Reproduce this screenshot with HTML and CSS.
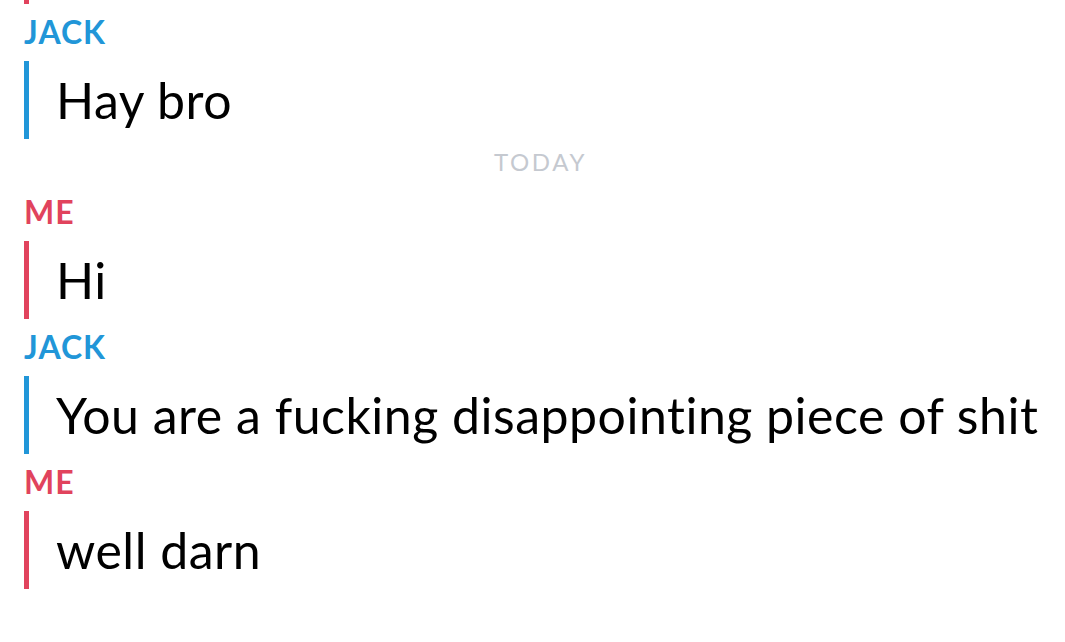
FILE: index.html
```html
<!DOCTYPE html>
<html lang="en">
<head>
    <meta charset="UTF-8">
    <meta name="viewport" content="width=device-width, initial-scale=1.0">
    <title>Chat</title>
    <link rel="stylesheet" href="styles.css">
</head>
<body>
    <div class="chat">
        <div class="msg me"></div>

        <div class="sender jack">JACK</div>
        <div class="msg jack">Hay bro</div>

        <div class="day">TODAY</div>

        <div class="sender me">ME</div>
        <div class="msg me">Hi</div>

        <div class="sender jack">JACK</div>
        <div class="msg jack">You are a fucking disappointing piece of shit</div>

        <div class="sender me">ME</div>
        <div class="msg me">well darn</div>
    </div>
</body>
</html>
```

FILE: styles.css
```css
body {
    margin: 0;
    background: #fff;
    font-family: Lato, "Open Sans", sans-serif;
    font-variant-ligatures: none;
    overflow: hidden;
}

.chat {
    margin-top: -74px;
    padding-left: 24px;
}

.sender {
    font-size: 32px;
    font-weight: 700;
    letter-spacing: 1px;
    line-height: 50px;
    padding-top: 3px;
    margin-bottom: 4px;
}

.sender.jack {
    color: #2196d8;
}

.sender.me {
    color: #e1435d;
}

.msg {
    height: 78px;
    border-left: 5px solid;
    padding-left: 27px;
    display: flex;
    align-items: center;
    font-size: 50px;
    letter-spacing: 0.5px;
    color: #000;
    white-space: nowrap;
}

.msg.jack {
    border-color: #2196d8;
}

.msg.me {
    border-color: #e1435d;
}

.day {
    height: 45px;
    line-height: 45px;
    text-align: center;
    font-size: 24px;
    letter-spacing: 2.6px;
    color: #c5c9d0;
    margin-left: -8px;
}
```
